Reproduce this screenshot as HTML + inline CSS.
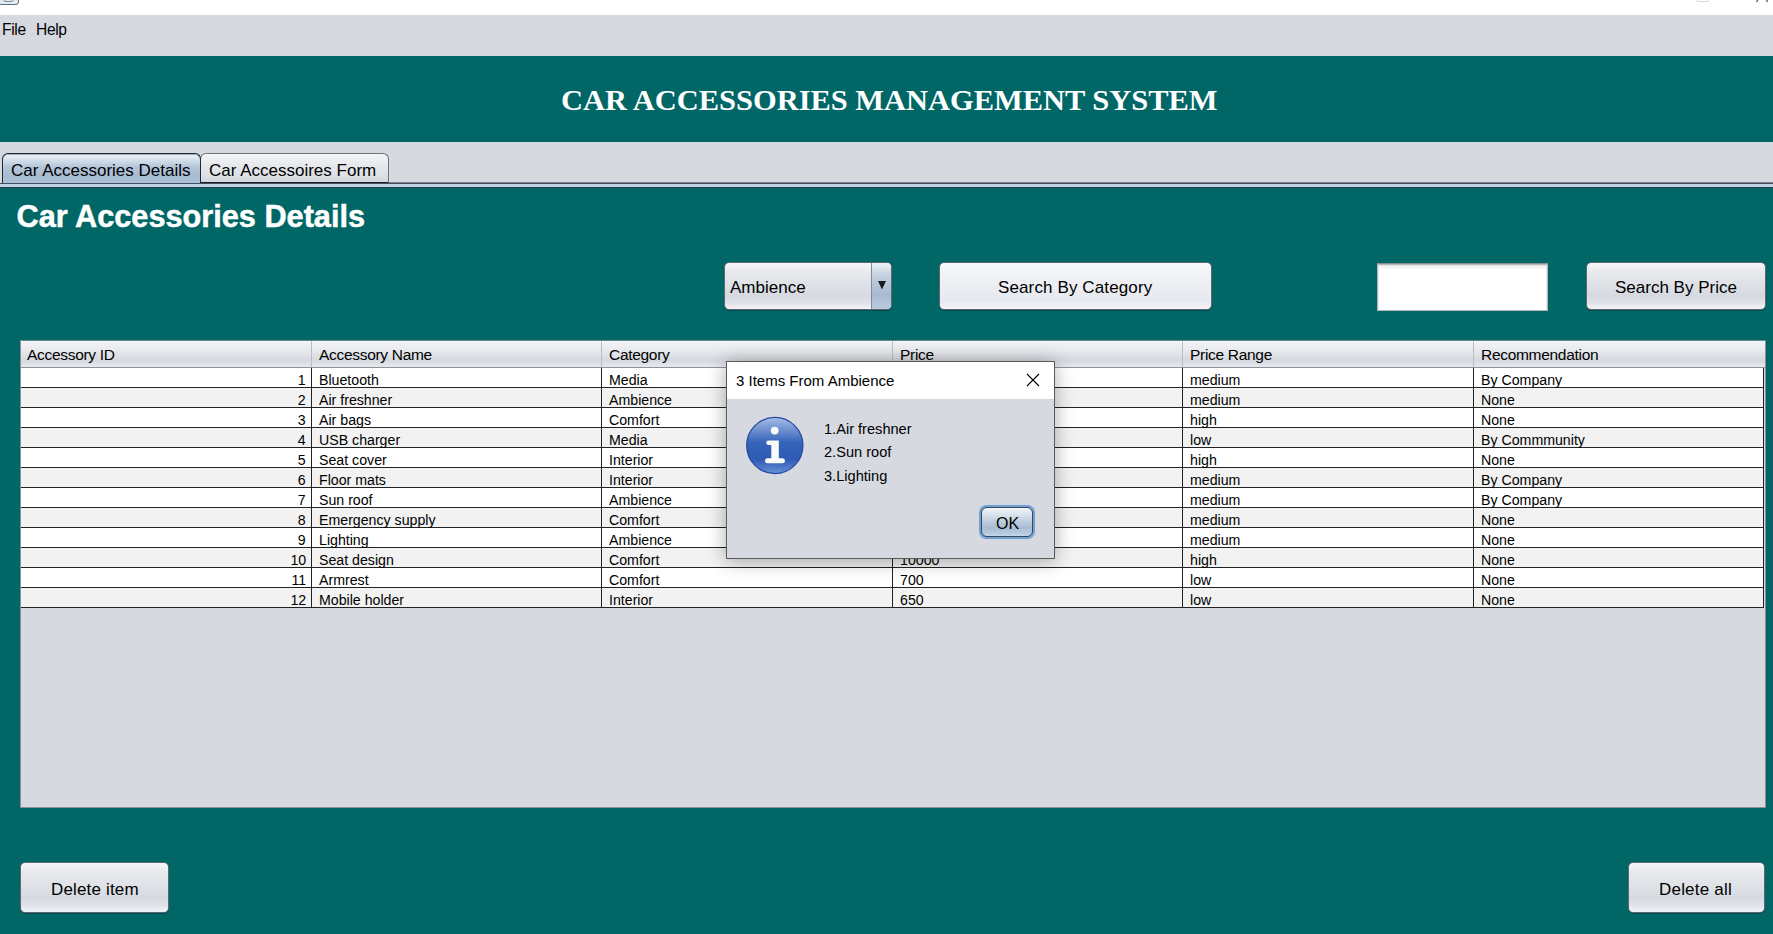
<!DOCTYPE html>
<html><head><meta charset="utf-8">
<style>
*{box-sizing:border-box;margin:0;padding:0}
html,body{width:1773px;height:934px;overflow:hidden;background:#006666}
body{position:relative;font-family:"Liberation Sans",sans-serif;color:#000}
.a{position:absolute}
.t{position:absolute;white-space:pre;line-height:1}
.btn{position:absolute;border:1px solid #5f6670;border-radius:5px;
 background:linear-gradient(#f7f7f9 0%,#e9eaee 18%,#dee1e6 48%,#d6d9e0 72%,#dfe2e8 86%,#f1f3f7 100%);
 box-shadow:0 1px 0 rgba(0,0,0,.25)}
.btxt{position:absolute;white-space:pre;font-size:17px;line-height:1}
.hdr{position:absolute;left:21px;top:341px;width:1744px;height:27px;
 background:linear-gradient(#f3f4f6 0%,#e6e8ec 40%,#d5d8df 75%,#e8eaee 100%);border-bottom:1px solid #8d9199}
.hsep{position:absolute;top:341px;width:1px;height:26px;background:#b9bdc5}
.htxt{position:absolute;top:347px;font-size:15.5px;letter-spacing:-0.3px;line-height:1;white-space:pre}
.row{position:absolute;left:21px;width:1743px;height:20px;border-bottom:1px solid #222}
.odd{background:#fff}
.even{background:#f2f2f2}
.vl{position:absolute;top:368px;width:1px;height:240px;background:#222}
.c{position:absolute;font-size:15.5px;line-height:1;white-space:pre;transform:scaleX(0.914);transform-origin:0 0}
.cr{transform-origin:100% 0}
</style></head><body>
<div class="a" style="left:0;top:0;width:1773px;height:15px;background:#fff"></div>
<div class="a" style="left:-2px;top:-10px;width:21px;height:15px;border:1px solid #587089;border-radius:3px;background:#e9e9e9"></div><div class="a" style="left:3px;top:-6px;width:11px;height:8px;border:1px solid #7590aa;border-radius:3px;background:#e4e4e4"></div>
<div class="a" style="left:1697px;top:-8px;width:12px;height:10px;border:1px solid #dadada"></div>
<svg class="a" style="left:1750px;top:0" width="23" height="4"><path d="M6.3 1.8 L8 0 M16.2 0 L17.9 1.8" stroke="#555" stroke-width="1.2"/></svg>
<div class="a" style="left:0;top:15px;width:1773px;height:41px;background:#d6d9df"></div>
<span class="t" style="left:2px;top:22px;font-size:15.6px;letter-spacing:-0.35px">File</span>
<span class="t" style="left:36px;top:22px;font-size:15.6px;letter-spacing:-0.35px">Help</span>
<div class="a" style="left:0;top:56px;width:1773px;height:86px;background:#006666"></div>
<span class="t" style="left:561px;top:83px;font:bold 30.45px 'Liberation Serif',serif;color:#fff">CAR ACCESSORIES MANAGEMENT SYSTEM</span>
<div class="a" style="left:0;top:142px;width:1773px;height:46px;background:#d6d9df"></div>
<div class="a" style="left:0;top:183px;width:1773px;height:5px;background:#c0d4e9;border-top:1px solid #444b5a;border-bottom:1px solid #343a48"></div>
<div class="a" style="left:389px;top:182px;width:1384px;height:1px;background:#80858f"></div>
<div class="a" style="left:200px;top:153px;width:189px;height:30px;border:1px solid #6b707a;border-bottom:1px solid #1a1d24;border-radius:6px 6px 0 0;background:linear-gradient(#f4f5f7 0%,#e6e8ec 40%,#dcdfe4 80%,#d3d6dc 100%)"></div>
<div class="a" style="left:2px;top:153px;width:199px;height:30px;border:1px solid #1c2836;border-bottom:none;border-radius:6px 6px 0 0;box-shadow:inset 0 1px 0 rgba(30,45,60,.35);background:linear-gradient(#eef2f6 0%,#d9e2ec 18%,#b3c5d9 45%,#a7bbd1 75%,#abbfd5 100%)"></div>
<span class="btxt" style="left:11px;top:162px">Car Accessories Details</span>
<span class="btxt" style="left:209px;top:162px">Car Accessoires Form</span>
<span class="t" style="left:16.5px;top:202px;font-weight:bold;font-size:30.7px;color:#fff;-webkit-text-stroke:0.5px #fff">Car Accessories Details</span>
<div class="btn" style="left:724px;top:262px;width:168px;height:48px"></div>
<div class="a" style="left:871px;top:263px;width:20px;height:46px;border-left:1px solid #7d8ea3;border-radius:0 4px 4px 0;background:linear-gradient(#eef2f6 0%,#c5d2e0 25%,#a8bad0 70%,#b9cbe0 100%)"></div>
<svg class="a" style="left:876px;top:280px" width="12" height="10"><path d="M2 1 L10 1 L6 9.5 Z" fill="#1a1a1a"/></svg>
<span class="btxt" style="left:730px;top:279px">Ambience</span>
<div class="btn" style="left:939px;top:262px;width:273px;height:48px;background:linear-gradient(#f9fafb 0%,#f1f2f5 25%,#ebedf2 55%,#e6e9f0 80%,#f3f5f9 100%)"></div>
<span class="btxt" style="left:998px;top:279px;letter-spacing:0.12px">Search By Category</span>
<div class="a" style="left:1377px;top:263px;width:171px;height:48px;background:#fff;border:1px solid #b4b6ba;border-top:1px solid #8e8e8e;box-shadow:inset 0 1px 0 #b9b9b9,inset 0 2px 0 #e4e4e4,inset 0 4px 2px #f0f0f0,inset 1px 0 0 #e6e6e6,inset -1px 0 0 #e6e6e6"></div>
<div class="btn" style="left:1586px;top:262px;width:180px;height:48px"></div>
<span class="btxt" style="left:1615px;top:279px">Search By Price</span>
<div class="a" style="left:20px;top:340px;width:1746px;height:468px;border:1px solid #8a8f98;border-top-color:#5f8c8c;background:#d6d9df"></div>
<div class="hdr"></div>
<span class="htxt" style="left:27px">Accessory ID</span>
<span class="htxt" style="left:319px">Accessory Name</span>
<span class="htxt" style="left:609px">Category</span>
<span class="htxt" style="left:900px">Price</span>
<span class="htxt" style="left:1190px">Price Range</span>
<span class="htxt" style="left:1481px">Recommendation</span>
<div class="hsep" style="left:311px"></div>
<div class="hsep" style="left:601px"></div>
<div class="hsep" style="left:892px"></div>
<div class="hsep" style="left:1182px"></div>
<div class="hsep" style="left:1473px"></div>
<div class="row odd" style="top:368px"></div>
<div class="row even" style="top:388px"></div>
<div class="row odd" style="top:408px"></div>
<div class="row even" style="top:428px"></div>
<div class="row odd" style="top:448px"></div>
<div class="row even" style="top:468px"></div>
<div class="row odd" style="top:488px"></div>
<div class="row even" style="top:508px"></div>
<div class="row odd" style="top:528px"></div>
<div class="row even" style="top:548px"></div>
<div class="row odd" style="top:568px"></div>
<div class="row even" style="top:588px"></div>
<div class="vl" style="left:311px"></div>
<div class="vl" style="left:601px"></div>
<div class="vl" style="left:892px"></div>
<div class="vl" style="left:1182px"></div>
<div class="vl" style="left:1473px"></div>
<div class="vl" style="left:1763px"></div>
<span class="c cr" style="right:1467px;top:371.5px">1</span>
<span class="c" style="left:319px;top:371.5px">Bluetooth</span>
<span class="c" style="left:609px;top:371.5px">Media</span>
<span class="c" style="left:1190px;top:371.5px">medium</span>
<span class="c" style="left:1481px;top:371.5px">By Company</span>
<span class="c cr" style="right:1467px;top:391.5px">2</span>
<span class="c" style="left:319px;top:391.5px">Air freshner</span>
<span class="c" style="left:609px;top:391.5px">Ambience</span>
<span class="c" style="left:1190px;top:391.5px">medium</span>
<span class="c" style="left:1481px;top:391.5px">None</span>
<span class="c cr" style="right:1467px;top:411.5px">3</span>
<span class="c" style="left:319px;top:411.5px">Air bags</span>
<span class="c" style="left:609px;top:411.5px">Comfort</span>
<span class="c" style="left:1190px;top:411.5px">high</span>
<span class="c" style="left:1481px;top:411.5px">None</span>
<span class="c cr" style="right:1467px;top:431.5px">4</span>
<span class="c" style="left:319px;top:431.5px">USB charger</span>
<span class="c" style="left:609px;top:431.5px">Media</span>
<span class="c" style="left:1190px;top:431.5px">low</span>
<span class="c" style="left:1481px;top:431.5px">By Commmunity</span>
<span class="c cr" style="right:1467px;top:451.5px">5</span>
<span class="c" style="left:319px;top:451.5px">Seat cover</span>
<span class="c" style="left:609px;top:451.5px">Interior</span>
<span class="c" style="left:1190px;top:451.5px">high</span>
<span class="c" style="left:1481px;top:451.5px">None</span>
<span class="c cr" style="right:1467px;top:471.5px">6</span>
<span class="c" style="left:319px;top:471.5px">Floor mats</span>
<span class="c" style="left:609px;top:471.5px">Interior</span>
<span class="c" style="left:1190px;top:471.5px">medium</span>
<span class="c" style="left:1481px;top:471.5px">By Company</span>
<span class="c cr" style="right:1467px;top:491.5px">7</span>
<span class="c" style="left:319px;top:491.5px">Sun roof</span>
<span class="c" style="left:609px;top:491.5px">Ambience</span>
<span class="c" style="left:1190px;top:491.5px">medium</span>
<span class="c" style="left:1481px;top:491.5px">By Company</span>
<span class="c cr" style="right:1467px;top:511.5px">8</span>
<span class="c" style="left:319px;top:511.5px">Emergency supply</span>
<span class="c" style="left:609px;top:511.5px">Comfort</span>
<span class="c" style="left:1190px;top:511.5px">medium</span>
<span class="c" style="left:1481px;top:511.5px">None</span>
<span class="c cr" style="right:1467px;top:531.5px">9</span>
<span class="c" style="left:319px;top:531.5px">Lighting</span>
<span class="c" style="left:609px;top:531.5px">Ambience</span>
<span class="c" style="left:1190px;top:531.5px">medium</span>
<span class="c" style="left:1481px;top:531.5px">None</span>
<span class="c cr" style="right:1467px;top:551.5px">10</span>
<span class="c" style="left:319px;top:551.5px">Seat design</span>
<span class="c" style="left:609px;top:551.5px">Comfort</span>
<span class="c" style="left:900px;top:551.5px">10000</span>
<span class="c" style="left:1190px;top:551.5px">high</span>
<span class="c" style="left:1481px;top:551.5px">None</span>
<span class="c cr" style="right:1467px;top:571.5px">11</span>
<span class="c" style="left:319px;top:571.5px">Armrest</span>
<span class="c" style="left:609px;top:571.5px">Comfort</span>
<span class="c" style="left:900px;top:571.5px">700</span>
<span class="c" style="left:1190px;top:571.5px">low</span>
<span class="c" style="left:1481px;top:571.5px">None</span>
<span class="c cr" style="right:1467px;top:591.5px">12</span>
<span class="c" style="left:319px;top:591.5px">Mobile holder</span>
<span class="c" style="left:609px;top:591.5px">Interior</span>
<span class="c" style="left:900px;top:591.5px">650</span>
<span class="c" style="left:1190px;top:591.5px">low</span>
<span class="c" style="left:1481px;top:591.5px">None</span>
<div class="btn" style="left:20px;top:862px;width:149px;height:51px"></div>
<span class="btxt" style="left:51px;top:881px;letter-spacing:0.16px">Delete item</span>
<div class="btn" style="left:1628px;top:862px;width:137px;height:51px"></div>
<span class="btxt" style="left:1659px;top:881px;letter-spacing:0.2px">Delete all</span>
<div class="a" style="left:726px;top:361px;width:329px;height:198px;border:1px solid #5a5a5a;background:#d6d9df;box-shadow:0 2px 18px rgba(0,0,0,.33)"></div>
<div class="a" style="left:727px;top:362px;width:327px;height:37px;background:#fff"></div>
<span class="t" style="left:736px;top:373px;font-size:15px">3 Items From Ambience</span>
<svg class="a" style="left:1026px;top:373px" width="14" height="14"><path d="M1 1 L13 13 M13 1 L1 13" stroke="#000" stroke-width="1.1"/></svg>
<svg class="a" style="left:744px;top:414px" width="62" height="62" viewBox="0 0 62 62">
<defs><linearGradient id="ig" x1="0" y1="0" x2="0" y2="1">
<stop offset="0" stop-color="#a6bde6"/><stop offset="0.45" stop-color="#3563b9"/><stop offset="0.75" stop-color="#2e5bb4"/><stop offset="1" stop-color="#6990d8"/></linearGradient></defs>
<circle cx="30.8" cy="31.5" r="28.1" fill="url(#ig)" stroke="#2549a0" stroke-width="1.3"/>
<circle cx="30.7" cy="16.6" r="3.9" fill="#fafafa"/>
<path d="M24.5 26.5 H34.8 V44.3 H38.4 A2.5 2.5 0 0 1 38.4 49.3 H23.5 A2.5 2.5 0 0 1 23.5 44.3 H27.3 V31 H24.5 A2.25 2.25 0 0 1 24.5 26.5 Z" fill="#fafafa"/>
</svg>
<span class="t" style="left:824px;top:422px;font-size:14.6px">1.Air freshner</span>
<span class="t" style="left:824px;top:445px;font-size:14.6px">2.Sun roof</span>
<span class="t" style="left:824px;top:469px;font-size:14.6px">3.Lighting</span>
<div class="a" style="left:979px;top:505px;width:56px;height:34px;border-radius:8px;background:#73a2d2;box-shadow:0 0 1px #9bbde0"></div><div class="a" style="left:981px;top:507px;width:52px;height:30px;border-radius:6px;border:1px solid #34485e;background:linear-gradient(#f3f6f9 0%,#dde6ef 20%,#bccbdb 50%,#a9bdd2 70%,#b6cadf 90%,#c4d7ea 100%)"></div>
<span class="t" style="left:996px;top:516px;font-size:16px">OK</span>
</body></html>
